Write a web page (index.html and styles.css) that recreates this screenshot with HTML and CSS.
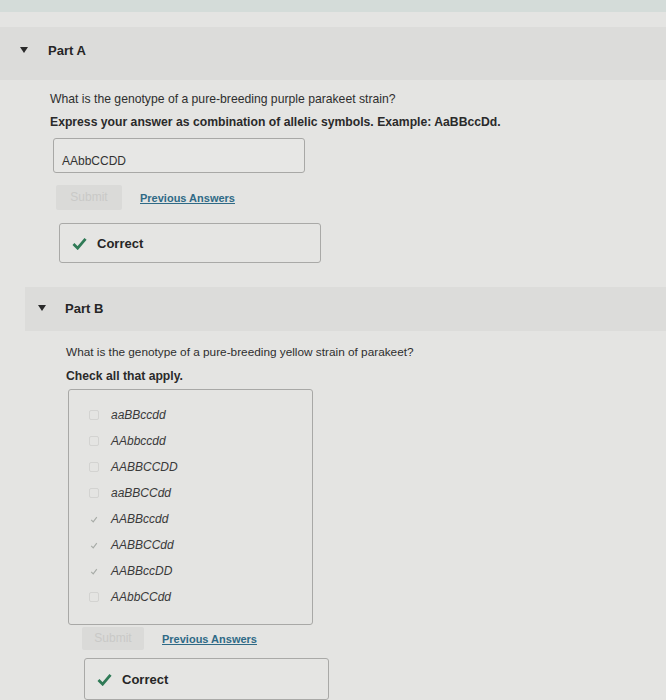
FILE: index.html
```html
<!DOCTYPE html>
<html>
<head>
<meta charset="utf-8">
<link rel="stylesheet" href="styles.css">
</head>
<body>
<div class="topstrip"></div>

<section class="part part-a">
  <div class="part-head"><span class="tri"></span><span class="part-title">Part A</span></div>
  <div class="part-body">
    <p class="q">What is the genotype of a pure-breeding purple parakeet strain?</p>
    <p class="instr">Express your answer as combination of allelic symbols. Example: AaBBccDd.</p>
    <div class="answer-input">AAbbCCDD</div>
    <div class="actions">
      <span class="submit">Submit</span>
      <a class="prev" href="#">Previous Answers</a>
    </div>
    <div class="correct">
      <svg class="check" viewBox="0 0 16 14" width="15" height="13"><path d="M1.5 7.5 L6 12 L14.5 2" fill="none" stroke="#2f7a56" stroke-width="3"/></svg>
      <span>Correct</span>
    </div>
  </div>
</section>

<section class="part part-b">
  <div class="part-head"><span class="tri"></span><span class="part-title">Part B</span></div>
  <div class="part-body">
    <p class="q">What is the genotype of a pure-breeding yellow strain of parakeet?</p>
    <p class="instr">Check all that apply.</p>
    <div class="options">
      <div class="opt"><span class="box"></span><span class="lbl">aaBBccdd</span></div>
      <div class="opt"><span class="box"></span><span class="lbl">AAbbccdd</span></div>
      <div class="opt"><span class="box"></span><span class="lbl">AABBCCDD</span></div>
      <div class="opt"><span class="box"></span><span class="lbl">aaBBCCdd</span></div>
      <div class="opt"><span class="box on"><svg viewBox="0 0 10 10" width="9" height="9"><path d="M1.5 5.5 L4 8 L8.5 2" fill="none" stroke="#a7aba7" stroke-width="1.4"/></svg></span><span class="lbl">AABBccdd</span></div>
      <div class="opt"><span class="box on"><svg viewBox="0 0 10 10" width="9" height="9"><path d="M1.5 5.5 L4 8 L8.5 2" fill="none" stroke="#a7aba7" stroke-width="1.4"/></svg></span><span class="lbl">AABBCCdd</span></div>
      <div class="opt"><span class="box on"><svg viewBox="0 0 10 10" width="9" height="9"><path d="M1.5 5.5 L4 8 L8.5 2" fill="none" stroke="#a7aba7" stroke-width="1.4"/></svg></span><span class="lbl">AABBccDD</span></div>
      <div class="opt"><span class="box"></span><span class="lbl">AAbbCCdd</span></div>
    </div>
    <div class="actions">
      <span class="submit">Submit</span>
      <a class="prev" href="#">Previous Answers</a>
    </div>
    <div class="correct">
      <svg class="check" viewBox="0 0 16 14" width="15" height="13"><path d="M1.5 7.5 L6 12 L14.5 2" fill="none" stroke="#2f7a56" stroke-width="3"/></svg>
      <span>Correct</span>
    </div>
  </div>
</section>
</body>
</html>
```

FILE: styles.css
```css
html, body {
  margin: 0;
  padding: 0;
}
body {
  width: 666px;
  height: 700px;
  overflow: hidden;
  background: #e4e4e2;
  font-family: "Liberation Sans", Arial, sans-serif;
  color: #2b2b2b;
}
.topstrip {
  height: 12px;
  background: #d4dcd9;
}
p { margin: 0; }

.part-head {
  display: flex;
  align-items: center;
  box-sizing: border-box;
  background: #dcdcda;
}
.tri {
  width: 0;
  height: 0;
  border-left: 4px solid transparent;
  border-right: 4px solid transparent;
  border-top: 6px solid #2a2a2a;
}
.part-title {
  font-size: 13px;
  font-weight: bold;
  color: #262626;
}

/* Part A */
.part-a { margin-top: 15px; }
.part-a .part-head { height: 53px; padding-left: 20px; padding-bottom: 7px; }
.part-a .part-title { margin-left: 20px; }
.part-a .part-body { padding-left: 50px; padding-top: 11px; }

.q {
  font-size: 12.2px;
  line-height: 16px;
  color: #2e2e2e;
}
.instr {
  margin-top: 7px;
  font-size: 12.2px;
  line-height: 16px;
  font-weight: bold;
  color: #2a2a2a;
}
.answer-input {
  margin-top: 8px;
  margin-left: 3px;
  width: 252px;
  height: 35px;
  box-sizing: border-box;
  border: 1px solid #a8a8a6;
  border-radius: 3px;
  background: #e7e7e5;
  padding: 15px 0 0 8px;
  font-size: 12px;
  line-height: 14px;
  color: #333;
}
.actions {
  display: flex;
  align-items: center;
  margin-top: 12px;
}
.submit {
  width: 66px;
  height: 25px;
  line-height: 25px;
  text-align: center;
  background: #dadad8;
  color: #c9c9c7;
  font-size: 12px;
  border-radius: 2px;
}
.prev {
  margin-left: 18px;
  font-size: 11px;
  font-weight: bold;
  color: #2f6a86;
  text-decoration: underline;
}
.part-a .actions { margin-left: 6px; }
.correct {
  display: flex;
  align-items: center;
  box-sizing: border-box;
  height: 40px;
  border: 1px solid #a9a9a7;
  border-radius: 3px;
  background: #e5e5e3;
  font-size: 13px;
  font-weight: bold;
  color: #262626;
}
.correct span { margin-left: 10px; }
.part-a .correct {
  margin-top: 13px;
  margin-left: 9px;
  width: 262px;
  padding-left: 12px;
}

/* Part B */
.part-b { margin-top: 24px; }
.part-b .part-head {
  height: 44px;
  margin-left: 25px;
  padding-left: 13px;
  padding-bottom: 2px;
}
.part-b .part-title { margin-left: 19px; }
.part-b .part-body { padding-left: 66px; padding-top: 13px; }
.part-b .q { font-size: 11.8px; }
.part-b .instr { margin-top: 8px; }

.options {
  margin-top: 5px;
  margin-left: 2px;
  width: 245px;
  height: 236px;
  box-sizing: border-box;
  border: 1px solid #a8a8a6;
  border-radius: 3px;
  padding-top: 17px;
  display: flex;
  flex-direction: column;
  gap: 10px;
}
.opt {
  display: flex;
  align-items: center;
  height: 16px;
  padding-left: 20px;
}
.box {
  width: 10px;
  height: 10px;
  box-sizing: border-box;
  border: 1px solid #d3d3d1;
  border-radius: 2px;
  display: flex;
  align-items: center;
  justify-content: center;
}
.box.on { border-color: transparent; }
.lbl {
  margin-left: 12px;
  font-size: 12px;
  font-style: italic;
  color: #3a3a3a;
}
.part-b .actions { margin-top: 2px; margin-left: 16px; }
.part-b .submit { width: 62px; height: 23px; line-height: 23px; }
.part-b .correct {
  margin-top: 8px;
  margin-left: 18px;
  width: 245px;
  height: 42px;
  padding-left: 12px;
}
```
